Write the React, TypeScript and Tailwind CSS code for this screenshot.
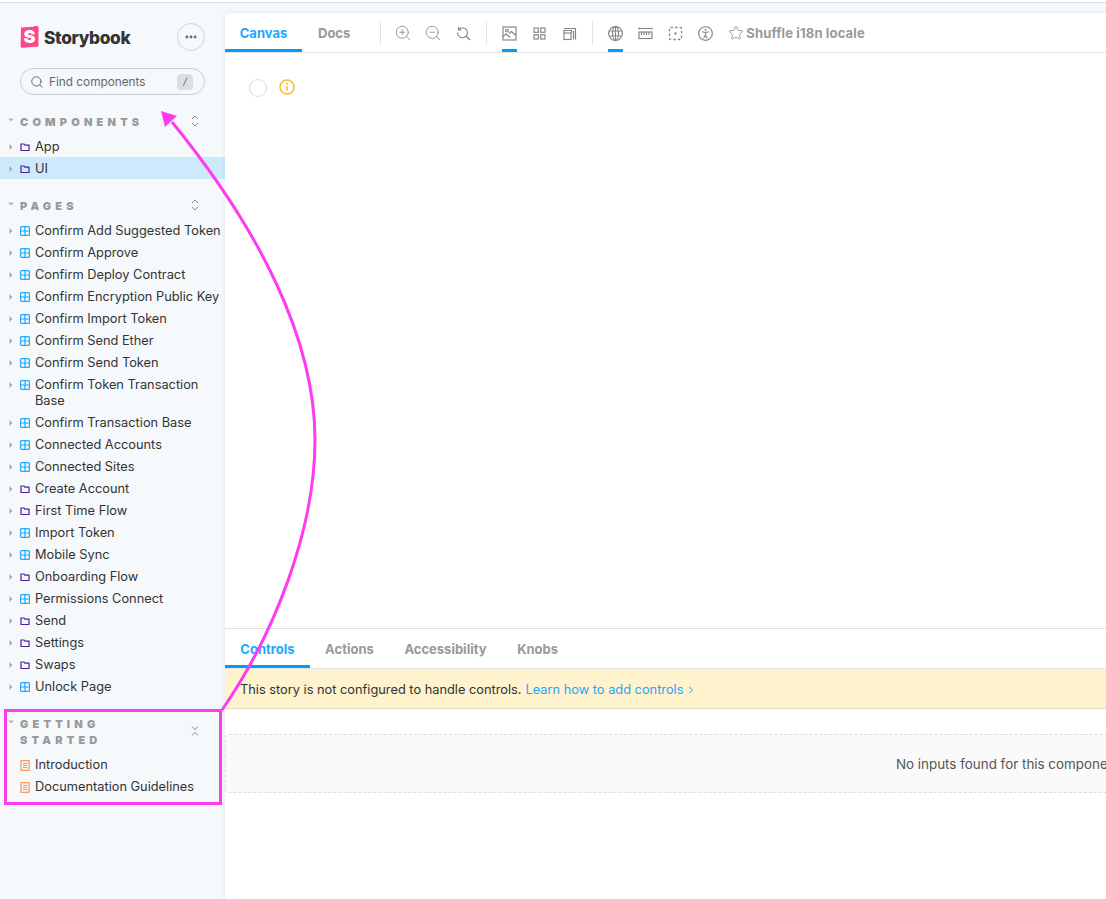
import React from "react";
import { ZoomIn, ZoomOut, Star, Search, Ellipsis } from "lucide-react";

const font = { fontFamily: "Inter, 'Noto Sans', sans-serif" };

const Caret = ({ down = false }: { down?: boolean }) => (
  <svg width="6" height="6" viewBox="0 0 6 6" className="shrink-0">
    {down ? <path d="M0 1.5h6L3 4.5z" fill="#b5b5b5" /> : <path d="M1.5 0v6L4.5 3z" fill="#a8a8a8" />}
  </svg>
);

const Kind = ({ kind }: { kind: string }) => {
  if (kind === "folder")
    return (
      <svg width="10" height="10" viewBox="0 0 10 10" className="shrink-0">
        <path d="M1 2h3l1 1.2h4v5.3H1z" fill="none" stroke="#4b1f9e" strokeWidth="1.2" />
      </svg>
    );
  if (kind === "grid")
    return (
      <svg width="10" height="10" viewBox="0 0 10 10" className="shrink-0">
        <rect x="0.6" y="0.6" width="8.8" height="8.8" rx="1" fill="none" stroke="#1ea7fd" strokeWidth="1.2" />
        <path d="M5 1v8M1 5h8" stroke="#1ea7fd" strokeWidth="1.2" />
      </svg>
    );
  return (
    <svg width="10" height="11" viewBox="0 0 10 11" className="shrink-0">
      <rect x="1" y="0.7" width="8" height="9.6" fill="none" stroke="#ff8a3c" strokeWidth="1.1" />
      <path d="M2.8 3.5h4.4M2.8 5.5h4.4M2.8 7.5h4.4" stroke="#ff8a3c" strokeWidth="0.9" />
    </svg>
  );
};

const Row = ({ label, kind, active }: { label: string; kind: string; active?: boolean }) => (
  <div className={`flex items-start pb-[2px] pt-[4px] text-[12.8px] leading-4 text-[#333] ${active ? "bg-[#cde9fc]" : ""}`}>
    <span className="flex h-4 w-[20px] shrink-0 items-center pl-[8px]">{kind === "doc" ? null : <Caret />}</span>
    <span className="flex h-4 w-[15px] shrink-0 items-center">
      <Kind kind={kind} />
    </span>
    <span>{label}</span>
  </div>
);

const Expander = ({ collapse }: { collapse?: boolean }) => (
  <svg width="8" height="12" viewBox="0 0 8 12" className="-mt-[2px] shrink-0">
    <path
      d={collapse ? "M1 1.5l3 3 3-3M1 10.5l3-3 3 3" : "M1 4l3-3 3 3M1 8l3 3 3-3"}
      fill="none"
      stroke="#888"
      strokeWidth="1"
    />
  </svg>
);

const SectionHead = ({ lines, collapse }: { lines: string[]; collapse?: boolean }) => (
  <div className="relative flex items-center py-[2px] pl-[20px] pr-[26px]">
    <span className="absolute left-[8px] top-[5px]">
      <Caret down />
    </span>
    <div className="flex-1 text-[11px] font-black uppercase leading-4 tracking-[0.38em] text-[#999]">
      {lines.map((l) => (
        <div key={l}>{l}</div>
      ))}
    </div>
    <Expander collapse={collapse} />
  </div>
);

const pages: [string, string][] = [
  ["Confirm Add Suggested Token", "grid"],
  ["Confirm Approve", "grid"],
  ["Confirm Deploy Contract", "grid"],
  ["Confirm Encryption Public Key", "grid"],
  ["Confirm Import Token", "grid"],
  ["Confirm Send Ether", "grid"],
  ["Confirm Send Token", "grid"],
  ["Confirm Token Transaction Base", "grid"],
  ["Confirm Transaction Base", "grid"],
  ["Connected Accounts", "grid"],
  ["Connected Sites", "grid"],
  ["Create Account", "folder"],
  ["First Time Flow", "folder"],
  ["Import Token", "grid"],
  ["Mobile Sync", "grid"],
  ["Onboarding Flow", "folder"],
  ["Permissions Connect", "grid"],
  ["Send", "folder"],
  ["Settings", "folder"],
  ["Swaps", "folder"],
  ["Unlock Page", "grid"],
];

const I = ({ children, active }: { children: React.ReactNode; active?: boolean }) => (
  <span className="relative flex h-[39px] w-[30px] shrink-0 items-center justify-center pt-[1px] text-[#858585]">
    {children}
    {active && <span className="absolute bottom-0 left-[7.5px] h-[3px] w-[15px] bg-[#029cfd]" />}
  </span>
);

const Svg = ({ children }: { children: React.ReactNode }) => (
  <svg width="15" height="15" viewBox="0 0 15 15" fill="none" stroke="#858585" strokeWidth="1.15">
    {children}
  </svg>
);

const Divider = () => <span className="mx-[7px] h-6 w-px shrink-0 bg-[#e4e4e4]" />;

const tabBase = "flex items-center px-[15.3px] pt-[2px] text-[13px] font-bold";

export default function App() {
  return (
    <div className="relative h-[899px] w-[1106px] overflow-hidden bg-[#f6f9fc]" style={font}>
      <div className="h-[3px] border-b border-[#d9d9d9] bg-white" />
      <div className="flex h-[896px]">
        <aside className="w-[225px] shrink-0 pt-[20px]">
          <div className="flex h-[28px] items-center pl-[20px] pr-[20px]">
            <svg width="19" height="22" viewBox="0 0 19 22" className="shrink-0">
              <path d="M1 1.5L14 .7V0l2.4-.1.2 0L17.5.4 18.5.3V20.6L1.4 21.8 0.6 21z" fill="#ff4785" />
              <text x="9.5" y="17" textAnchor="middle" fontSize="18" fontWeight="900" fill="#fff" fontFamily="Inter">
                S
              </text>
            </svg>
            <span className="ml-[5px] flex-1 pt-[1px] text-[17.3px] font-extrabold tracking-[-0.02em] text-[#333]">Storybook</span>
            <span className="flex h-[28px] w-[28px] items-center justify-center rounded-full border border-[#cfd3d6]">
              <Ellipsis size={14} strokeWidth={3} color="#666" />
            </span>
          </div>
          <div className="mx-[20px] mt-[17px] flex h-[27px] items-center rounded-full border border-[#c9cdd0] pl-[9px] pr-[11px] text-[11.8px] text-[#666]">
            <Search size={14} color="#555" strokeWidth={1.5} />
            <span className="ml-[5px] flex-1 pt-[2px]">Find components</span>
            <span className="flex h-4 w-4 items-center justify-center rounded-sm bg-[#dcdfe1] text-[10px] italic">/</span>
          </div>

          <div className="mt-[17px]">
            <SectionHead lines={["Components"]} />
            <div className="mt-[3px]">
              <Row label="App" kind="folder" />
              <Row label="UI" kind="folder" active />
            </div>
          </div>
          <div className="mt-[17px]">
            <SectionHead lines={["Pages"]} />
            <div className="mt-[3px]">
              {pages.map(([l, k]) => (
                <Row key={l} label={l} kind={k} />
              ))}
            </div>
          </div>
          <div className="mt-[17px]">
            <SectionHead lines={["Getting", "Started"]} collapse />
            <div className="mt-[3px]">
              <Row label="Introduction" kind="doc" />
              <Row label="Documentation Guidelines" kind="doc" />
            </div>
          </div>
        </aside>

        <main className="mt-[10px] flex flex-1 flex-col rounded-tl-[4px] bg-white shadow-[0_0_6px_rgba(0,0,0,0.08)]">
          <div className="flex h-[40px] shrink-0 items-center border-b border-[#e4e4e4] text-[13px]">
            <span className="relative flex h-[39px] w-[77px] items-center justify-center pt-[2px] font-bold text-[#1ea7fd]">
              Canvas
              <span className="absolute bottom-0 left-0 right-0 h-[3px] bg-[#029cfd]" />
            </span>
            <span className="flex h-[39px] items-center px-[16px] pt-[2px] font-bold text-[#999]">Docs</span>
            <span className="ml-[7px]" />
            <Divider />
            <I>
              <ZoomIn size={18} strokeWidth={1.1} />
            </I>
            <I>
              <ZoomOut size={18} strokeWidth={1.1} />
            </I>
            <I>
              <Svg>
                <path d="M2.6 3.6A5 5 0 1 1 1.5 6.5" />
                <path d="M2.5 1v2.8h2.8" />
                <path d="M10 10l4 4" />
              </Svg>
            </I>
            <span className="ml-[1px]" />
            <Divider />
            <I active>
              <Svg>
                <rect x="1" y="1" width="13" height="13" />
                <circle cx="5" cy="4.6" r="1.4" />
                <path d="M1 10.5l3-2.5 4 3.2M7 7.5l2.5-2L14 9.5" />
              </Svg>
            </I>
            <I>
              <Svg>
                <rect x="2" y="2" width="4.3" height="4.3" />
                <rect x="8.7" y="2" width="4.3" height="4.3" />
                <rect x="2" y="8.7" width="4.3" height="4.3" />
                <rect x="8.7" y="8.7" width="4.3" height="4.3" />
              </Svg>
            </I>
            <I>
              <Svg>
                <path d="M2 2.5h11.5v11" />
                <path d="M11.5 5v8.5" />
                <rect x="2" y="7" width="7" height="6.5" />
                <path d="M2 7V4.5h7.5V7" />
              </Svg>
            </I>
            <span className="ml-[1px]" />
            <Divider />
            <I active>
              <Svg>
                <circle cx="7.5" cy="7.5" r="6.9" />
                <ellipse cx="7.5" cy="7.5" rx="3" ry="6.9" />
                <path d="M7.5 .6v13.8M1.3 5h12.4M1.3 10h12.4" />
              </Svg>
            </I>
            <I>
              <Svg>
                <path d="M1 2.5h13M1 1.5v2M14 1.5v2" />
                <rect x="1" y="6" width="13" height="6.5" />
                <path d="M3.5 6v3M6 6v3M8.5 6v3M11 6v3" />
              </Svg>
            </I>
            <I>
              <Svg>
                <rect x="1.5" y="1.5" width="12" height="12" rx="1" strokeDasharray="2.4 2.2" strokeWidth="1.3" />
                <circle cx="7.5" cy="7.5" r="0.6" fill="#858585" />
              </Svg>
            </I>
            <I>
              <Svg>
                <circle cx="7.5" cy="7.5" r="6.8" />
                <circle cx="7.5" cy="4" r="0.9" fill="#858585" stroke="none" />
                <path d="M3.8 5.7l3.7.8 3.7-.8M7.5 6.5v2.8M7.5 9.3l-2 3M7.5 9.3l2 3" />
              </Svg>
            </I>
            <span className="flex items-center pl-[8px] pt-[2px] font-bold tracking-[0.15px] text-[#999]">
              <Star size={16} strokeWidth={1.2} color="#808080" className="mr-[2px] -mt-[1px]" />
              Shuffle i18n locale
            </span>
          </div>

          <div className="h-[576px] shrink-0 border-b border-[#e0e0e0] pl-[24px] pt-[26px]">
            <div className="flex items-center">
              <span className="h-[18px] w-[18px] rounded-full border border-[#dcdcdc]" />
              <svg width="16" height="16" viewBox="0 0 16 16" className="ml-[12px] -mt-[2px]" fill="none">
                <circle cx="8" cy="8" r="7" stroke="#fbb92f" strokeWidth="1.6" />
                <path d="M8 7v4.4" stroke="#fbb92f" strokeWidth="1.6" />
                <circle cx="8" cy="4.7" r="1" fill="#fbb92f" />
              </svg>
            </div>
          </div>

          <div className="flex h-[40px] shrink-0 border-b border-[#e4e4e4] text-[#999]">
            <span className={`${tabBase} relative text-[#1ea7fd]`}>
              Controls
              <span className="absolute bottom-0 left-0 right-0 h-[3px] bg-[#029cfd]" />
            </span>
            <span className={tabBase}>Actions</span>
            <span className={tabBase}>Accessibility</span>
            <span className={tabBase}>Knobs</span>
          </div>
          <div className="flex h-[40px] shrink-0 items-center border-b border-[#e6dcbc] bg-[#fef3cc] pl-[15px] pt-[2px] text-[12.8px] whitespace-nowrap text-[#333]">
            This story is not configured to handle controls.
            <span className="ml-[4px] flex items-center text-[#1ea7fd]">
              Learn how to add controls
              <svg width="6" height="8" viewBox="0 0 6 8" className="ml-[5px]" fill="none" stroke="#1ea7fd" strokeWidth="1">
                <path d="M1 .8L4.5 4 1 7.2" />
              </svg>
            </span>
          </div>
          <div className="mt-[25px] flex h-[59px] w-[1566px] items-center justify-center rounded-[4px] border border-dashed border-[#dedede] bg-[#fafafa] pt-[1px] text-[13.4px] text-[#555]">
            No inputs found for this component
          </div>
        </main>
      </div>

      <div className="pointer-events-none absolute left-[4px] top-[709px] h-[96px] w-[218px] border-[3px] border-[#ff3bf0]" />
      <svg width="1106" height="899" className="pointer-events-none absolute left-0 top-0" fill="none">
        <path d="M222 710C 274 635, 315 530, 315 440C 315 340, 260 230, 172 122" stroke="#ff3bf0" strokeWidth="3" />
        <path d="M161 111L177 116L165 127Z" fill="#ff3bf0" />
      </svg>
    </div>
  );
}
